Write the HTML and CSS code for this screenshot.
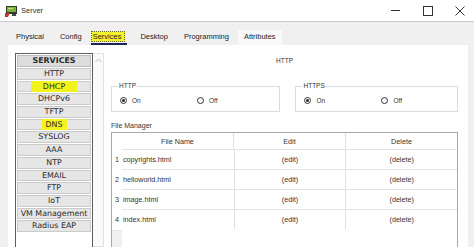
FILE: index.html
```html
<!DOCTYPE html>
<html lang="en">
<head>
    <meta charset="UTF-8">
    <title>Server</title>
    <link rel="stylesheet" href="styles.css">
</head>
<body>
    <div class="titlebar">
        <svg class="app-icon" width="14" height="13" viewBox="0 0 14 13">
            <rect x="2" y="1" width="11" height="8" fill="#2f3b2a"/>
            <rect x="3" y="2" width="9" height="5" fill="#7fb23a"/>
            <rect x="4" y="3" width="5" height="1" fill="#c8e07a"/>
            <path d="M1 8 L6 8 L4 12 L1 12 Z" fill="#c0392b"/>
            <rect x="8" y="9" width="4" height="2" fill="#444"/>
        </svg>
        <span class="title">Server</span>
        <div class="controls">
            <span class="ctl-min"></span>
            <span class="ctl-max"></span>
            <svg class="ctl-close" width="10" height="10" viewBox="0 0 10 10">
                <path d="M0.5 0.5 L9.5 9.5 M9.5 0.5 L0.5 9.5" stroke="#333" stroke-width="1"/>
            </svg>
        </div>
    </div>

    <div class="tabs">
        <span class="tab tab-physical">Physical</span>
        <span class="tab tab-config">Config</span>
        <span class="tab tab-services"><span class="hl">Services</span></span>
        <span class="tab tab-desktop">Desktop</span>
        <span class="tab tab-programming">Programming</span>
        <span class="tab tab-attributes">Attributes</span>
    </div>

    <div class="window-body">
        <div class="panel">
            <div class="side">
                <div class="svc-list">
                    <div class="svc svc-head">SERVICES</div>
                    <div class="svc">HTTP</div>
                    <div class="svc"><span class="mark mark-wide">DHCP</span></div>
                    <div class="svc">DHCPv6</div>
                    <div class="svc">TFTP</div>
                    <div class="svc"><span class="mark">DNS</span></div>
                    <div class="svc">SYSLOG</div>
                    <div class="svc">AAA</div>
                    <div class="svc">NTP</div>
                    <div class="svc">EMAIL</div>
                    <div class="svc">FTP</div>
                    <div class="svc">IoT</div>
                    <div class="svc">VM Management</div>
                    <div class="svc">Radius EAP</div>
                </div>
                <div class="scroll">
                    <svg width="7" height="5" viewBox="0 0 7 5">
                        <path d="M0.5 4 L3.5 1 L6.5 4" stroke="#b8b8b8" fill="none"/>
                    </svg>
                </div>
            </div>

            <div class="main">
                <div class="heading">HTTP</div>
                <div class="groups">
                    <fieldset class="group group-http">
                        <legend>HTTP</legend>
                        <div class="radios">
                            <span class="radio checked"></span><span class="opt">On</span>
                            <span class="radio"></span><span class="opt">Off</span>
                        </div>
                    </fieldset>
                    <fieldset class="group group-https">
                        <legend>HTTPS</legend>
                        <div class="radios">
                            <span class="radio checked"></span><span class="opt">On</span>
                            <span class="radio"></span><span class="opt">Off</span>
                        </div>
                    </fieldset>
                </div>

                <div class="fm-label">File Manager</div>
                <div class="files">
                    <div class="row row-head">
                        <span class="num"></span>
                        <span class="cell">File Name</span>
                        <span class="cell">Edit</span>
                        <span class="cell">Delete</span>
                    </div>
                    <div class="row">
                        <span class="num">1</span>
                        <span class="cell name">copyrights.html</span>
                        <span class="cell">(edit)</span>
                        <span class="cell">(delete)</span>
                    </div>
                    <div class="row">
                        <span class="num">2</span>
                        <span class="cell name">helloworld.html</span>
                        <span class="cell">(edit)</span>
                        <span class="cell">(delete)</span>
                    </div>
                    <div class="row">
                        <span class="num">3</span>
                        <span class="cell name">image.html</span>
                        <span class="cell">(edit)</span>
                        <span class="cell">(delete)</span>
                    </div>
                    <div class="row">
                        <span class="num">4</span>
                        <span class="cell name">index.html</span>
                        <span class="cell">(edit)</span>
                        <span class="cell">(delete)</span>
                    </div>
                    <div class="row row-empty">
                        <span class="num"></span>
                    </div>
                </div>
            </div>
        </div>
    </div>
</body>
</html>
```

FILE: styles.css
```css
html, body {
    margin: 0;
    padding: 0;
}
body {
    width: 474px;
    height: 247px;
    overflow: hidden;
    background: #f0f0f0;
    font-family: "Liberation Sans", Arial, sans-serif;
    color: #222;
}
.titlebar {
    height: 22px;
    background: #fff;
    border-bottom: 1px solid #c9c9c9;
    display: flex;
    align-items: center;
    box-sizing: border-box;
}
.app-icon {
    margin-left: 4px;
    margin-top: 1px;
}
.title {
    margin-left: 3px;
    font-size: 7.5px;
    color: #333;
}
.controls {
    margin-left: auto;
    display: flex;
    align-items: center;
    height: 22px;
}
.ctl-min {
    width: 9px;
    height: 1px;
    background: #333;
    margin-right: 23px;
}
.ctl-max {
    width: 8px;
    height: 8px;
    border: 1px solid #333;
    margin-right: 22px;
}
.ctl-close {
    margin-right: 9px;
}
.tabs {
    height: 23px;
    display: flex;
    align-items: flex-end;
    font-size: 7.5px;
    color: #222;
}
.tab {
    height: 15px;
    line-height: 14px;
}
.tab-physical { margin-left: 16px; }
.tab-config { margin-left: 16px; }
.tab-services {
    margin-left: 9px;
    border-bottom: 2px solid #1b2550;
    padding: 0 2px 0 0;
    height: 13px;
    line-height: 12px;
}
.tab-services .hl {
    display: inline-block;
    background: #f4f42a;
    border: 1px dotted #6b6b2a;
    padding: 0 3px 0 1px;
    line-height: 9px;
    margin-top: 1px;
}
.tab-desktop { margin-left: 13px; }
.tab-programming { margin-left: 16px; }
.tab-attributes {
    margin-left: 9px;
    background: #f9f9f9;
    padding: 0 6px;
    height: 15px;
    line-height: 14px;
}
.window-body {
    display: flex;
}
.panel {
    margin-left: 8px;
    width: 460px;
    min-width: 0;
    flex: none;
    height: 202px;
    background: #fff;
    display: flex;
}
.side {
    display: flex;
    padding: 8px 0 0 7px;
}
.svc-list {
    border: 1px solid #5e5e5e;
    border-bottom: none;
    padding: 1px 1px 0;
    display: flex;
    flex-direction: column;
    gap: 1px;
    box-sizing: border-box;
    width: 78px;
}
.svc {
    height: 11.7px;
    background: #e6e6e6;
    border: 1px solid #cacaca;
    box-sizing: border-box;
    font-family: "DejaVu Sans", Verdana, sans-serif;
    font-size: 7.9px;
    line-height: 10px;
    text-align: center;
    color: #2a2a2a;
    white-space: nowrap;
}
.svc-head {
    height: 12px;
    background: #dcdcdc;
    font-weight: bold;
    border-color: #bdbdbd;
}
.mark {
    background: #f2f21c;
    padding: 1px 4px;
}
.mark-wide {
    padding: 1px 12px;
}
.scroll {
    width: 11px;
    background: #fafafa;
    border: 1px solid #e2e2e2;
    border-left: none;
    box-sizing: border-box;
    display: flex;
    justify-content: center;
    padding-top: 4px;
    height: 194px;
}
.main {
    flex: 1;
    min-width: 0;
    padding: 0 10px 0 7px;
    font-size: 6.5px;
    color: #333;
}
.heading {
    text-align: center;
    margin-top: 12px;
    height: 10px;
    line-height: 8px;
    font-size: 6.5px;
}
.groups {
    display: flex;
    gap: 15px;
    margin-top: 16px;
}
.group {
    margin: 0;
    min-width: 0;
    border: 1px solid #dcdcdc;
    padding: 0 0 0 6px;
    height: 27px;
    box-sizing: content-box;
}
.group legend {
    padding: 0 1px;
    margin-left: 0;
    font-size: 6.5px;
    line-height: 6px;
}
.group-http {
    width: 162px;
}
.group-https {
    width: 155px;
}
.radios {
    display: flex;
    align-items: center;
    margin-top: 8px;
}
.radio {
    width: 7px;
    height: 7px;
    border: 1px solid #333;
    border-radius: 50%;
    box-sizing: border-box;
    display: inline-flex;
    align-items: center;
    justify-content: center;
    margin-left: 2px;
    flex: none;
}
.radio.checked::after {
    content: "";
    width: 3px;
    height: 3px;
    border-radius: 50%;
    background: #222;
}
.opt {
    margin-left: 5px;
    width: 63px;
}
.fm-label {
    margin-top: 10px;
    font-size: 7px;
    line-height: 8px;
}
.files {
    border: 1px solid #a8a8a8;
    border-bottom: none;
    margin-top: 2px;
    font-size: 7.2px;
    color: #333;
}
.row {
    display: flex;
    height: 20px;
    align-items: stretch;
}
.row + .row:not(.row-empty) .cell {
    border-top: 1px solid #e4e4e4;
}
.row-head + .row .cell {
    border-top: none;
}
.row-head {
    height: 16px;
}
.num {
    width: 10px;
    flex: none;
    display: flex;
    align-items: center;
    justify-content: center;
}
.cell {
    flex: 1 1 0;
    min-width: 0;
    display: flex;
    align-items: center;
    justify-content: center;
    border-left: 1px solid #e0e0e0;
    box-sizing: border-box;
}
.cell:nth-child(2) {
    border-left: none;
}
.cell.name {
    justify-content: flex-start;
    padding-left: 1px;
}
.row-empty {
    height: 20px;
}
.row-empty .num {
    background: #f0f0f0;
    border-top: 1px solid #e4e4e4;
    margin-top: 1px;
}
```
